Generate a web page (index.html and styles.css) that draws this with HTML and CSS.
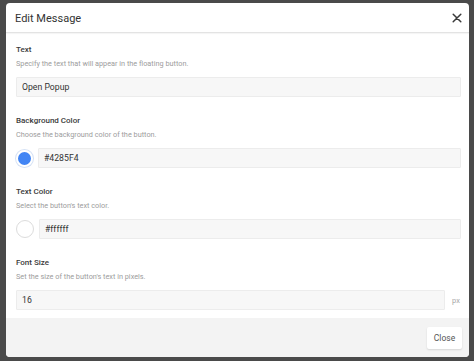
FILE: index.html
```html
<!DOCTYPE html>
<html>
<head>
<meta charset="utf-8">
<link rel="stylesheet" href="styles.css">
</head>
<body>
<div class="modal">
  <div class="modal-header">
    <span class="title">Edit Message</span>
    <svg class="close-x" width="10" height="10" viewBox="0 0 10 10"><path d="M1.2 1.2L8.8 8.8M8.8 1.2L1.2 8.8" stroke="#3a3a3a" stroke-width="1.5" stroke-linecap="round"/></svg>
  </div>
  <div class="modal-body">
    <div class="field">
      <div class="label">Text</div>
      <div class="desc">Specify the text that will appear in the floating button.</div>
      <div class="input">Open Popup</div>
    </div>
    <div class="field">
      <div class="label">Background Color</div>
      <div class="desc">Choose the background color of the button.</div>
      <div class="row">
        <span class="swatch blue"></span>
        <div class="input grow">#4285F4</div>
      </div>
    </div>
    <div class="field">
      <div class="label">Text Color</div>
      <div class="desc">Select the button's text color.</div>
      <div class="row">
        <span class="swatch white"></span>
        <div class="input grow">#ffffff</div>
      </div>
    </div>
    <div class="field last">
      <div class="label">Font Size</div>
      <div class="desc">Set the size of the button's text in pixels.</div>
      <div class="row">
        <div class="input grow">16</div>
        <span class="unit">px</span>
      </div>
    </div>
  </div>
  <div class="modal-footer">
    <button class="btn">Close</button>
  </div>
</div>
</body>
</html>
```
FILE: styles.css
```css
html, body {
  margin: 0;
  padding: 0;
}
body {
  background: #4a4a4a;
  font-family: Roboto, "Liberation Sans", Arial, sans-serif;
  width: 474px;
  height: 361px;
  overflow: hidden;
  padding-top: 3px;
  box-sizing: border-box;
}
.modal {
  margin-left: 6px;
  width: 463px;
  height: 354px;
  background: #fff;
  border-radius: 4px;
  display: flex;
  flex-direction: column;
  overflow: hidden;
}
.modal-header {
  flex: none;
  height: 29px;
  border-bottom: 1px solid #e3e3e3;
  display: flex;
  align-items: center;
  justify-content: space-between;
  padding: 0 7px 0 9px;
  box-shadow: 0 1px 1px rgba(0,0,0,0.04);
}
.title {
  font-size: 11px;
  color: #333;
  padding-top: 1px;
}
.close-x {
  margin-top: 1px;
}
.modal-body {
  flex: 1;
  min-height: 0;
  padding: 12px 8px 0 10px;
  display: flex;
  flex-direction: column;
  overflow: hidden;
}
.field {
  margin-bottom: 19px;
}
.field.last {
  margin-bottom: 0;
}
.label {
  font-size: 8px;
  font-weight: 500;
  color: #3a3a3a;
  line-height: 10px;
}
.desc {
  font-size: 7.3px;
  color: #9d9d9d;
  line-height: 10px;
  margin-top: 4px;
}
.input {
  margin-top: 8px;
  height: 20px;
  background: #f7f7f7;
  border: 1px solid #ececec;
  border-radius: 1px;
  box-sizing: border-box;
  font-size: 8.7px;
  color: #333;
  display: flex;
  align-items: center;
  padding-left: 5px;
}
.row {
  display: flex;
  align-items: center;
  margin-top: 8px;
}
.row .input {
  margin-top: 0;
}
.grow {
  flex: 1;
  height: 20px;
}
.swatch {
  width: 17px;
  height: 17px;
  border-radius: 50%;
  box-sizing: border-box;
  margin-right: 5px;
  flex: none;
}
.swatch.blue {
  background: #4285F4;
  border: 2px solid #fff;
  box-shadow: 0 0 0 1px #d6e2f5;
}
.swatch.white {
  background: #fff;
  border: 1px solid #dcdcdc;
  width: 18px;
  height: 18px;
}
.unit {
  font-size: 7.5px;
  color: #a8a8a8;
  margin-left: 7px;
  margin-right: 1px;
}
.modal-footer {
  flex: none;
  height: 39px;
  background: #f3f3f3;
  display: flex;
  align-items: center;
  justify-content: flex-end;
  padding-right: 7px;
}
.btn {
  font-family: Roboto, "Liberation Sans", Arial, sans-serif;
  width: 35px;
  height: 22px;
  background: #fff;
  border: none;
  border-radius: 2px;
  box-shadow: 0 1px 2px rgba(0,0,0,0.12);
  font-size: 8.5px;
  color: #555;
  padding: 0;
  margin-top: 1px;
}
```
